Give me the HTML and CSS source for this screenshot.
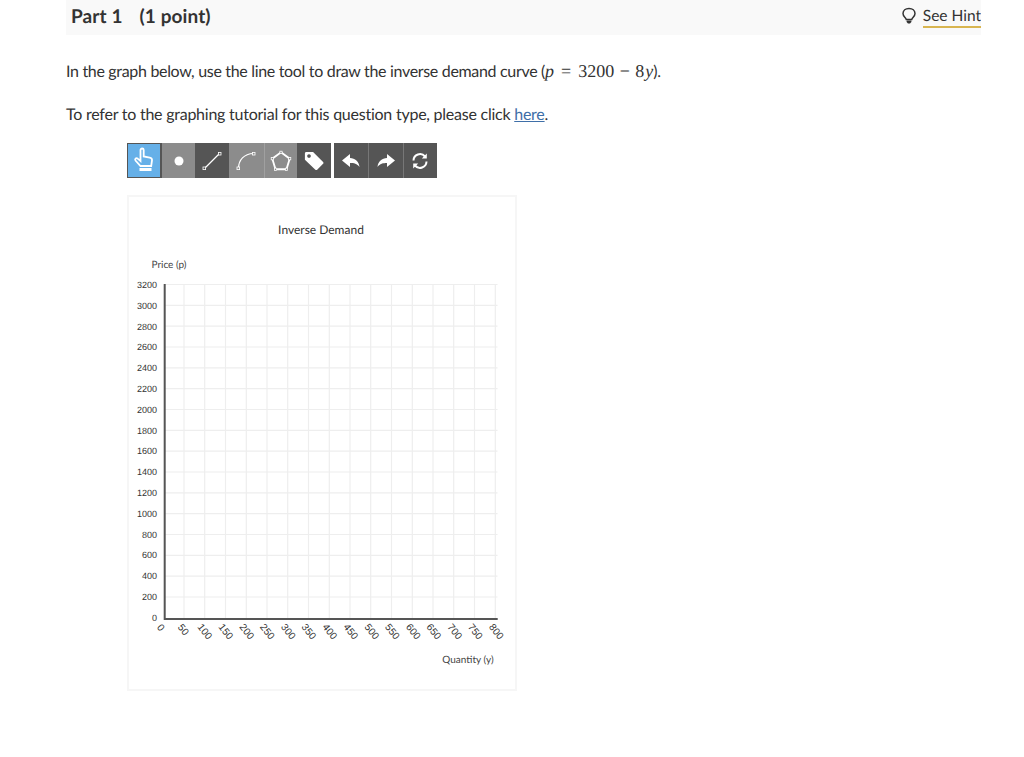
FILE: index.html
```html
<!DOCTYPE html>
<html lang="en">
<head>
<meta charset="utf-8">
<title>Part 1</title>
<link rel="stylesheet" href="styles.css">
</head>
<body>
<main class="page">
  <header class="part-head">
    <h1 class="part-title"><span>Part 1</span><span>(1 point)</span></h1>
    <a class="hint">
      <svg class="hint-icon" width="16" height="18" viewBox="0 0 16 18"><path d="M5.2 12.400C4.600 10.400 2 9.500 2 6.600 2 3.600 4.600 1.500 8 1.500s6 2.100 6 5.100c0 2.900-2.600 3.800-3.200 5.800z" fill="none" stroke="#333" stroke-width="1.500"/><path d="M5.600 13.400h4.800v1.600L9 16.500H7L5.600 15z" fill="#333"/></svg>
      <span class="hint-text">See Hint</span>
    </a>
  </header>
  <p class="question">In the graph below, use the line tool to draw the inverse demand curve (<span class="math"><i>p</i> = 3200<span class="math-op"> − </span>8<i class="math-y">y</i></span>).</p>
  <p class="tutorial">To refer to the graphing tutorial for this question type, please click <a class="link">here</a>.</p>

  <div class="toolbar">
    <div class="tool-group">
      <button class="tool tool-active"><svg width="24" height="28" viewBox="0 0 24 28"><path d="M8.500 3c0-2 3.200-2 3.200 0v6.500l6 1.100c1.500.3 2.500 1.200 2.300 2.800l-.8 5.600H8.500L3.500 13.500c-1.100-1.500.9-3.200 2.200-1.900l2.800 2.400z" fill="none" stroke="#fff" stroke-width="1.800"/><rect x="7.500" y="21" width="12" height="3" fill="#fff"/></svg></button>
      <button class="tool tool-light"><svg width="12" height="12" viewBox="0 0 12 12"><circle cx="6" cy="6" r="4.500" fill="#fff"/></svg></button>
      <button class="tool tool-dark tool-wide"><svg width="20" height="20" viewBox="0 0 20 20"><path d="M2.500 17.500 17.500 2.500" stroke="#fff" stroke-width="1.200"/><rect x="1" y="16" width="2.600" height="2.600" fill="#555" stroke="#fff" stroke-width=".8"/><rect x="16.400" y="1.400" width="2.600" height="2.600" fill="#555" stroke="#fff" stroke-width=".8"/></svg></button>
      <button class="tool tool-light tool-wide"><svg width="20" height="20" viewBox="0 0 20 20"><path d="M2.500 17.500C2.500 9 8 2.800 17.500 2.500" fill="none" stroke="#fff" stroke-width="1.200"/><rect x="1" y="16" width="2.600" height="2.600" fill="#8c8c8c" stroke="#fff" stroke-width=".8"/><rect x="16.400" y="1.400" width="2.600" height="2.600" fill="#8c8c8c" stroke="#fff" stroke-width=".8"/></svg></button>
      <button class="tool tool-light tool-poly"><svg width="22" height="22" viewBox="0 0 24 24"><path d="M12 2.500 21.500 9.500 18 21H6L2.500 9.500z" fill="none" stroke="#fff" stroke-width="2"/><g fill="#8c8c8c" stroke="#fff" stroke-width=".8"><rect x="10.800" y="1.300" width="2.400" height="2.400"/><rect x="20.300" y="8.300" width="2.400" height="2.400"/><rect x="16.800" y="19.800" width="2.400" height="2.400"/><rect x="4.800" y="19.800" width="2.400" height="2.400"/><rect x="1.300" y="8.300" width="2.400" height="2.400"/></g></svg></button>
      <button class="tool tool-dark tool-wide"><svg width="20" height="20" viewBox="0 0 22 22"><path d="M1 2.500C1 1.700 1.700 1 2.500 1H10l11 11c.6.600.6 1.400 0 2l-6.500 6.500c-.6.600-1.400.6-2 0L1 9.500zM5.500 3.500a2 2 0 1 0 .01 0z" fill="#fff" fill-rule="evenodd"/></svg></button>
    </div>
    <div class="tool-group">
      <button class="tool tool-dark tool-hist"><svg width="20" height="16" viewBox="0 0 20 16"><path d="M9 1 1 7.500 9 14V10c4 0 7 .5 9.500 4C18 8.500 14 5 9 5z" fill="#fff"/></svg></button>
      <button class="tool tool-dark tool-hist tool-sep"><svg width="20" height="16" viewBox="0 0 20 16"><path d="M11 1 19 7.500 11 14V10c-4 0-7 .5-9.500 4C2 8.500 6 5 11 5z" fill="#fff"/></svg></button>
      <button class="tool tool-dark tool-hist tool-sep"><svg width="18" height="18" viewBox="0 0 18 18"><path d="M2.500 8.500A6.500 6.500 0 0 1 14 4.500M15.500 9.500A6.500 6.500 0 0 1 4 13.500" fill="none" stroke="#fff" stroke-width="2"/><path d="M15.800 1.500v5h-5zM2.200 16.500v-5h5z" fill="#fff"/></svg></button>
    </div>
  </div>

  <section class="graph-card">
    <svg class="graph" width="386" height="492" viewBox="129 197 386 492">
      <text class="title" x="321" y="234" text-anchor="middle">Inverse Demand</text>
      <text class="axis-name" x="169" y="268" text-anchor="middle">Price (p)</text>
      <text class="axis-name" x="468" y="663" text-anchor="middle">Quantity (y)</text>
      <g class="grid">
        <path d="M184 284V618M204.700 284V618M225.500 284V618M246.300 284V618M267 284V618M287.700 284V618M308.500 284V618M329.300 284V618M350 284V618M370.700 284V618M391.500 284V618M412.300 284V618M433 284V618M453.700 284V618M474.500 284V618M495.300 284V618"/>
        <path d="M165 284.500H497.500M165 305.300H497.500M165 326.200H497.500M165 347H497.500M165 367.800H497.500M165 388.700H497.500M165 409.500H497.500M165 430.300H497.500M165 451.200H497.500M165 472H497.500M165 492.800H497.500M165 513.700H497.500M165 534.500H497.500M165 555.300H497.500M165 576.200H497.500M165 597H497.500"/>
      </g>
      <path class="axis" d="M164.700 284V620M163.700 619H497.700"/>
      <g class="tick-y" text-anchor="end">
        <text x="157" y="288">3200</text><text x="157" y="309">3000</text><text x="157" y="330">2800</text><text x="157" y="350">2600</text><text x="157" y="371">2400</text><text x="157" y="392">2200</text><text x="157" y="413">2000</text><text x="157" y="434">1800</text><text x="157" y="454">1600</text><text x="157" y="475">1400</text><text x="157" y="496">1200</text><text x="157" y="517">1000</text><text x="157" y="538">800</text><text x="157" y="558">600</text><text x="157" y="579">400</text><text x="157" y="600">200</text><text x="157" y="621">0</text>
      </g>
      <g class="tick-x" text-anchor="middle">
        <text y="3.500" transform="translate(161 627.500) rotate(52)">0</text>
        <text y="3.500" transform="translate(183.500 629.500) rotate(52)">50</text>
        <text y="3.500" transform="translate(205 631.500) rotate(52)">100</text>
        <text y="3.500" transform="translate(226 631.500) rotate(52)">150</text>
        <text y="3.500" transform="translate(247 631.500) rotate(52)">200</text>
        <text y="3.500" transform="translate(267.500 631.500) rotate(52)">250</text>
        <text y="3.500" transform="translate(288.500 631.500) rotate(52)">300</text>
        <text y="3.500" transform="translate(309 631.500) rotate(52)">350</text>
        <text y="3.500" transform="translate(330 631.500) rotate(52)">400</text>
        <text y="3.500" transform="translate(351 631.500) rotate(52)">450</text>
        <text y="3.500" transform="translate(372 631.500) rotate(52)">500</text>
        <text y="3.500" transform="translate(392.500 631.500) rotate(52)">550</text>
        <text y="3.500" transform="translate(413.500 631.500) rotate(52)">600</text>
        <text y="3.500" transform="translate(434 631.500) rotate(52)">650</text>
        <text y="3.500" transform="translate(455 631.500) rotate(52)">700</text>
        <text y="3.500" transform="translate(475.500 631.500) rotate(52)">750</text>
        <text y="3.500" transform="translate(496.500 631.500) rotate(52)">800</text>
      </g>
    </svg>
  </section>
</main>
</body>
</html>
```
FILE: styles.css
```css
* { box-sizing: border-box; }
html, body { margin: 0; padding: 0; background: #fff; }
body { font-family: Lato, "Liberation Sans", sans-serif; color: #333; text-rendering: geometricPrecision; }
.page { width: 981px; height: 757px; padding-left: 66px; overflow: hidden; }
.part-head {
  height: 35px; background: #f9f9f9; padding-left: 5px;
  display: flex; justify-content: space-between; align-items: flex-start;
}
.part-title {
  margin: 5px 0 0; font-size: 19px; line-height: 24px; font-weight: 700; color: #333;
  display: flex; gap: 17px; letter-spacing: .1px;
}
.hint { display: flex; align-items: flex-start; gap: 6px; padding-top: 6px; }
.hint-icon { margin-top: 1px; }
.hint-text {
  font-size: 15.500px; line-height: 20px; height: 22px;
  border-bottom: 2px solid #d8b550;
}
.question { margin: 25px 0 0; font-size: 16px; line-height: 22px; letter-spacing: -.32px; }
.tutorial { margin: 21px 0 0; font-size: 16px; line-height: 22px; letter-spacing: -.24px; }
.math { font-family: "Liberation Serif", serif; font-size: 18px; word-spacing: 2.500px; letter-spacing: 0; }
.math-op { word-spacing: 1px; }
.math-y { margin-left: 1px; }
.link { color: #3f6fa8; text-decoration: underline; }
.toolbar { display: flex; gap: 3px; margin: 17px 0 0 61px; height: 35px; }
.tool-group { display: flex; }
.tool {
  width: 33px; height: 35px; border: 0; padding: 0; margin: 0;
  display: flex; align-items: center; justify-content: center;
}
.tool-wide { width: 34.330px; }
.tool-active { width: 35px; background: #66b0e8; border: 1px solid #555; border-right-width: 2px; }
.tool-light { background: #8c8c8c; }
.tool-dark { background: #555; }
.tool-poly { border-left: 1px solid #a0a0a0; }
.tool-hist { width: 34.300px; }
.tool-sep { border-left: 1px solid #777; }
.graph-card {
  width: 390px; height: 496px; margin: 17px 0 0 61px;
  border: 2px solid #f6f6f6; background: #fff;
}
.graph { display: block; }
.title { font: 12px Lato, sans-serif; fill: #333; }
.axis-name { font: 10px Lato, sans-serif; fill: #444; }
.grid path { fill: none; stroke: #eee; stroke-width: 1.200; }
.axis { fill: none; stroke: #555; stroke-width: 2; }
.tick-y text, .tick-x text { font: 9px "Liberation Sans", sans-serif; fill: #333; }
.tick-x text { font-size: 10px; }
```
